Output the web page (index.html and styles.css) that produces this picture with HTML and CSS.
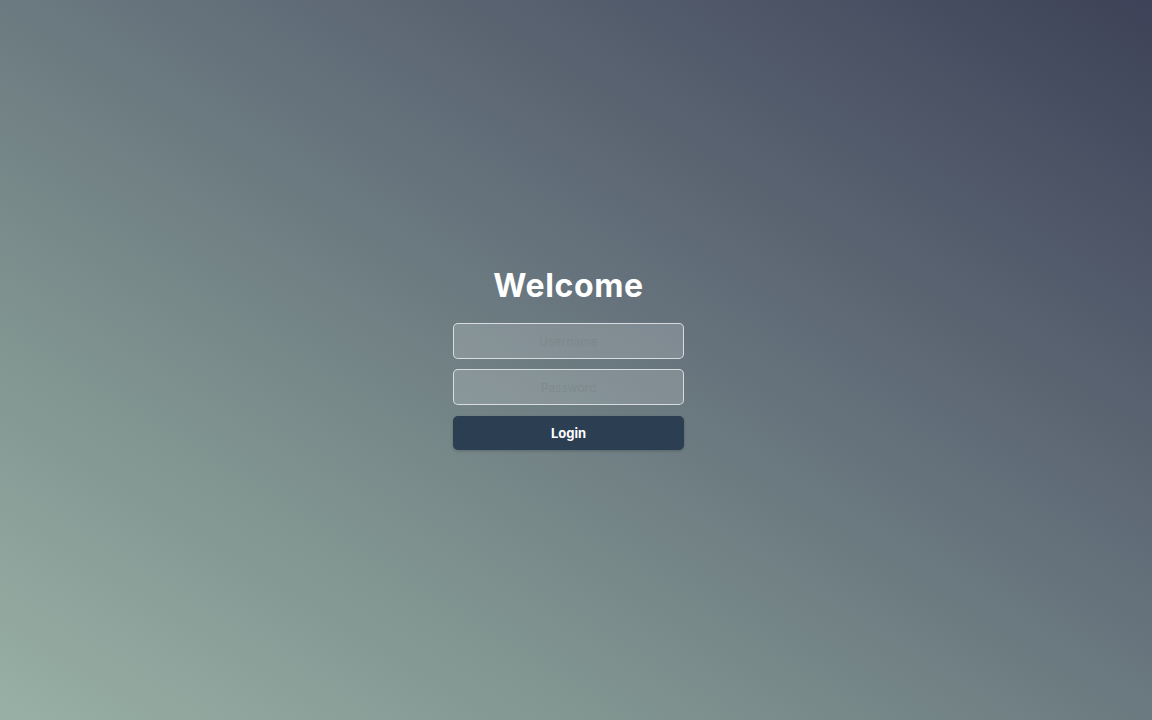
FILE: index.html
```html
<!DOCTYPE html>
<html lang="en">
<head>
<meta charset="utf-8">
<title>Welcome</title>
<link rel="stylesheet" href="styles.css">
</head>
<body>
<main class="page">
  <form class="login">
    <h1 class="title">Welcome</h1>
    <input class="field" type="text" placeholder="Username">
    <input class="field" type="password" placeholder="Password">
    <button class="btn" type="button">Login</button>
  </form>
</main>
</body>
</html>
```

FILE: styles.css
```css
html, body {
  margin: 0;
  height: 100%;
}
body {
  font-family: "Inter", "Noto Sans", "Liberation Sans", sans-serif;
  background: linear-gradient(to top right, #98b0a5 0%, #7e918e 30%, #67747d 55%, #3d4258 100%);
  overflow: hidden;
}
.page {
  min-height: 100vh;
  display: flex;
  align-items: center;
  justify-content: center;
  padding-right: 15px;
  padding-bottom: 4px;
  box-sizing: border-box;
}
.login {
  display: flex;
  flex-direction: column;
  align-items: center;
  width: 231px;
}
.title {
  margin: 0 0 17px;
  font-size: 32px;
  line-height: 40px;
  font-weight: 700;
  color: #ffffff;
  letter-spacing: 0.6px;
}
.field {
  box-sizing: border-box;
  width: 231px;
  height: 36px;
  margin: 0 0 10px;
  padding: 0 10px;
  border: 1px solid rgba(235, 240, 242, 0.8);
  border-radius: 5px;
  background: rgba(255, 255, 255, 0.17);
  font-family: inherit;
  font-size: 12px;
  color: #ffffff;
  text-align: center;
  outline: none;
}
.field::placeholder {
  color: rgba(110, 120, 125, 0.35);
}
.btn {
  box-sizing: border-box;
  width: 231px;
  height: 34px;
  margin-top: 1px;
  border: none;
  border-radius: 5px;
  background: #2c3e52;
  color: #ffffff;
  font-family: inherit;
  font-size: 13px;
  font-weight: 700;
  box-shadow: 0 1px 3px rgba(0, 0, 0, 0.2);
}
```
